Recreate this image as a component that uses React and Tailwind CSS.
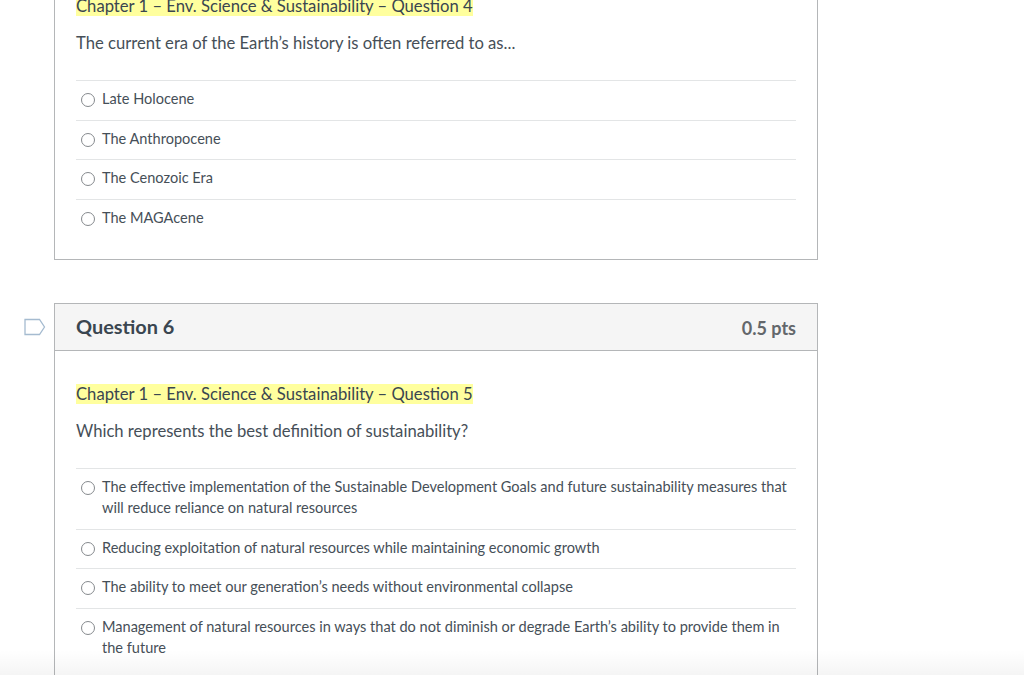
const font = { fontFamily: "Lato, 'Open Sans', sans-serif" };

function Option({ children }) {
  return (
    <div className="flex items-start border-t border-[#e3e5e6] pt-[7px] pb-[10.4px] pl-[5px] pr-[6px] text-[14.56px] leading-[21px] text-[#464f58]">
      <span className="mt-[5px] mr-[7px] h-[14px] w-[14px] shrink-0 rounded-full border border-[#85898d] bg-white" />
      <span>{children}</span>
    </div>
  );
}

function Heading({ title }) {
  return (
    <p className="text-[16.64px] leading-[20px] text-[#3a4650]">
      <span className="bg-[#ffff9e] inline-block">{title}</span>
    </p>
  );
}

function Flag() {
  return (
    <svg className="absolute left-[-31px] top-[14px]" width="22" height="18" viewBox="0 0 22 18" fill="none">
      <path d="M1 1.5H15.5L20.5 9L15.5 16.5H1Z" stroke="#a5bbd0" strokeWidth="1.3" />
    </svg>
  );
}

export default function App() {
  return (
    <div className="relative h-[675px] w-[1024px] overflow-hidden bg-white" style={font}>
      <div className="ml-[54px] mt-[-87px] flex w-[764px] flex-col gap-[43px]">
        <section className="border border-[#b4b6b8]">
          <div className="h-[47px]" />
          <div className="px-[21px] pt-[35px] pb-[20.6px]">
            <Heading title="Chapter 1 – Env. Science & Sustainability – Question 4" />
            <p className="mt-[17px] mb-[27.4px] text-[16.64px] leading-[20px] text-[#464f58]">
              The current era of the Earth’s history is often referred to as...
            </p>
            <Option>Late Holocene</Option>
            <Option>The Anthropocene</Option>
            <Option>The Cenozoic Era</Option>
            <Option>The MAGAcene</Option>
          </div>
        </section>
        <section className="relative border border-[#b4b6b8]">
          <Flag />
          <div className="flex h-[47px] items-center justify-between border-b border-[#b4b6b8] bg-[#f5f5f5] px-[21px]">
            <h2 className="text-[19.9px] font-bold text-[#3a4650]">Question 6</h2>
            <span className="mt-[3px] text-[18px] font-bold text-[#63676b]">0.5 pts</span>
          </div>
          <div className="px-[21px] pt-[33px] pb-[60px]">
            <Heading title="Chapter 1 – Env. Science & Sustainability – Question 5" />
            <p className="mt-[17px] mb-[27.8px] text-[16.64px] leading-[20px] text-[#464f58]">
              Which represents the best definition of sustainability?
            </p>
            <Option>The effective implementation of the Sustainable Development Goals and future sustainability measures that will reduce reliance on natural resources</Option>
            <Option>Reducing exploitation of natural resources while maintaining economic growth</Option>
            <Option>The ability to meet our generation’s needs without environmental collapse</Option>
            <Option>Management of natural resources in ways that do not diminish or degrade Earth’s ability to provide them in the future</Option>
          </div>
        </section>
      </div>
      <div className="pointer-events-none absolute bottom-0 left-0 h-[25px] w-full bg-gradient-to-b from-transparent to-black/[0.04]" />
    </div>
  );
}
